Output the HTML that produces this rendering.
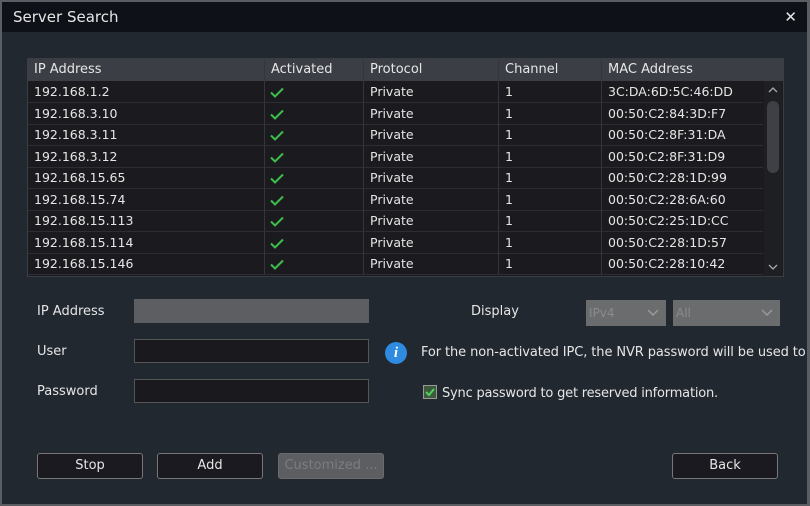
<!DOCTYPE html><html><head><style>
body{margin:0;width:810px;height:506px;overflow:hidden;background:#5a5d62;font-family:"DejaVu Sans","Liberation Sans",sans-serif;color:#e6e6e6;}
.win{position:absolute;left:2px;top:2px;width:805px;height:502px;background:#222830;}
.title{position:absolute;left:0;top:0;width:805px;height:30px;background:#0e1218;font-size:15px;line-height:30px;}
.title span{position:absolute;left:11px}
.title b{position:absolute;right:10px;font-size:15px}
.tbl{position:absolute;left:25px;top:56px;width:755px;height:217px;background:#1b1b1f;border:1px solid #3a3e44;}
.hdr{position:absolute;left:0;top:0;width:755px;height:22px;background:#3b3f45;font-size:13px;line-height:22px;}
.row{position:absolute;left:0;width:735px;height:21px;border-bottom:1px solid #2c2e33;font-size:12.5px;line-height:21px;}
.c{position:absolute;top:0;height:100%;border-left:1px solid #33363b;padding-left:6px;box-sizing:border-box}
.chk svg{position:absolute;left:5px;top:6px}
.sb{position:absolute;left:736px;top:22px;width:18px;height:195px;background:#1e1f23}
.lbl{position:absolute;font-size:13px}
.in{position:absolute;height:24px;box-sizing:border-box;border:1px solid #555;background:#1a1a1e}
.btn{position:absolute;top:451px;height:26px;width:106px;box-sizing:border-box;border:1px solid #777;border-radius:3px;background:#1b1a20;font-size:13px;text-align:center;line-height:24px}
.sel{position:absolute;top:298px;height:26px;background:#6b6c6e;color:#8a8b8d;font-size:12px;line-height:26px;padding-left:3px;box-sizing:border-box}
.sel svg{position:absolute;right:7px;top:9px}
</style></head><body><div class="win">
<div class="title"><span>Server Search</span><b>✕</b></div>
<div class="tbl">
<div class="hdr"><div class="c" style="left:0;border:0">IP Address</div><div class="c" style="left:236px">Activated</div><div class="c" style="left:335px">Protocol</div><div class="c" style="left:470px">Channel</div><div class="c" style="left:573px">MAC Address</div></div>
<div id="rows"></div>
<div class="sb"><div style="position:absolute;left:3px;top:20px;width:12px;height:72px;background:#3e4045;border-radius:6px"></div>
<svg style="position:absolute;left:4px;top:6px" width="10" height="6"><path d="M1 5L5 1L9 5" stroke="#aaa" fill="none" stroke-width="1.3"/></svg>
<svg style="position:absolute;left:4px;bottom:6px" width="10" height="6"><path d="M1 1L5 5L9 1" stroke="#aaa" fill="none" stroke-width="1.3"/></svg></div>
</div>
<div class="lbl" style="left:35px;top:302px">IP Address</div>
<div class="lbl" style="left:35px;top:342px">User</div>
<div class="lbl" style="left:35px;top:382px">Password</div>
<div class="in" style="left:132px;top:297px;width:235px;background:#5c5e62;border-color:#5c5e62"></div>
<div class="in" style="left:132px;top:337px;width:235px"></div>
<div class="in" style="left:132px;top:377px;width:235px"></div>
<div class="lbl" style="left:469px;top:302px">Display</div>
<div class="sel" style="left:584px;width:80px">IPv4<svg width="12" height="7"><path d="M1 1L6 6L11 1" stroke="#999" fill="none" stroke-width="1.5"/></svg></div>
<div class="sel" style="left:671px;width:107px">All<svg width="12" height="7"><path d="M1 1L6 6L11 1" stroke="#999" fill="none" stroke-width="1.5"/></svg></div>
<div style="position:absolute;left:383px;top:340px;width:22px;height:22px;border-radius:50%;background:#2e8be0;color:#fff;font:italic bold 15px 'Liberation Serif',serif;text-align:center;line-height:22px">i</div>
<div class="lbl" style="left:419px;top:343px;white-space:nowrap;letter-spacing:-0.1px">For the non-activated IPC, the NVR password will be used to</div>
<div style="position:absolute;left:421px;top:383px;width:14px;height:14px;box-sizing:border-box;background:#3d5a3d;border:1px solid #999"><svg style="position:absolute;left:1px;top:1px" width="10" height="10"><path d="M1 5L4 8L9 2" stroke="#4fd25a" fill="none" stroke-width="2"/></svg></div>
<div class="lbl" style="left:440px;top:384px;letter-spacing:-0.2px">Sync password to get reserved information.</div>
<div class="btn" style="left:35px">Stop</div>
<div class="btn" style="left:155px">Add</div>
<div class="btn" style="left:276px;background:#5c5e62;color:#7c7d80;border-color:#6a6b6e">Customized ...</div>
<div class="btn" style="left:670px">Back</div>
</div>
<script>
var d=[["192.168.1.2","3C:DA:6D:5C:46:DD"],["192.168.3.10","00:50:C2:84:3D:F7"],["192.168.3.11","00:50:C2:8F:31:DA"],["192.168.3.12","00:50:C2:8F:31:D9"],["192.168.15.65","00:50:C2:28:1D:99"],["192.168.15.74","00:50:C2:28:6A:60"],["192.168.15.113","00:50:C2:25:1D:CC"],["192.168.15.114","00:50:C2:28:1D:57"],["192.168.15.146","00:50:C2:28:10:42"]];
var ck='<svg width="14" height="11"><path d="M1 5.5L5 9.5L13 1.5" stroke="#3bbf4a" fill="none" stroke-width="2"/></svg>';
var h="";d.forEach(function(r,i){h+='<div class="row" style="top:'+(22+i*21.5)+'px"><div class="c" style="left:0;border:0">'+r[0]+'</div><div class="c chk" style="left:236px">'+ck+'</div><div class="c" style="left:335px">Private</div><div class="c" style="left:470px">1</div><div class="c" style="left:573px">'+r[1]+'</div></div>'});
document.getElementById("rows").innerHTML=h;
</script>
</body></html>
